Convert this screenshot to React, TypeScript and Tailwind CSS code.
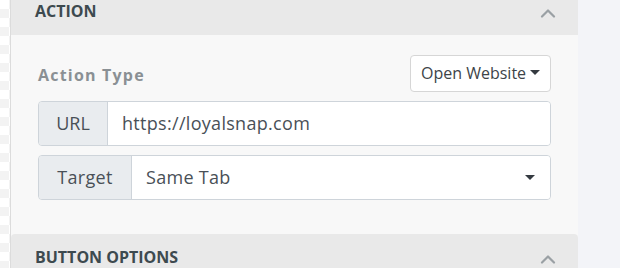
import React from "react";

function ChevronUp() {
  return (
    <svg width="16" height="10" viewBox="0 0 16 10" fill="none">
      <path d="M2 8.5 L8 2.5 L14 8.5" stroke="#9aa0a4" strokeWidth="2.2" strokeLinecap="round" strokeLinejoin="round" />
    </svg>
  );
}

function Caret() {
  return (
    <svg width="10" height="6" viewBox="0 0 10 6">
      <path d="M0 0 L10 0 L5 5 Z" fill="#343a40" />
    </svg>
  );
}

export default function App() {
  return (
    <div className="flex w-[620px] h-[268px] overflow-hidden bg-[#f3f4f8]" style={{ fontFamily: '"Open Sans", sans-serif' }}>
      <div className="w-[10px] shrink-0 bg-[repeating-conic-gradient(#f3f3f3_0%_25%,#ffffff_0%_50%)] bg-[length:18px_18px]" />
      <div className="w-[568px] shrink-0 flex flex-col border-l border-[#dcdcdc] bg-[#f8f8f8]">
        <div className="h-[35px] shrink-0 flex items-center justify-between bg-[#e9e9e9] pl-[24px] pr-[22px]">
          <span className="text-[16px] font-bold text-[#3d4a4f] leading-none -mt-[13px]">ACTION</span>
          <span className="-mt-[9px]"><ChevronUp /></span>
        </div>
        <div className="flex flex-col pl-[27px] pr-[27px] pt-[20px] pb-[34px]">
          <div className="flex items-center justify-between h-[36px]">
            <span className="text-[16px] font-bold text-[#8a9094] tracking-[1.2px] mt-[3px]">Action Type</span>
            <div className="h-[37px] w-[141px] flex items-center gap-[4px] rounded-[4px] border border-[#d6d6d6] bg-white pl-[10px]">
              <span className="text-[16px] text-[#3d4448]">Open Website</span>
              <Caret />
            </div>
          </div>
          <div className="mt-[10px] flex h-[45px] rounded-[4px] border border-[#ced4da] overflow-hidden">
            <div className="w-[69px] shrink-0 flex items-center justify-center bg-[#e9ecef] border-r border-[#ced4da] text-[18px] text-[#495057]">URL</div>
            <div className="flex-1 flex items-center bg-white pl-[14px] text-[18px] text-[#495057] tracking-[0.3px]">https://loyalsnap.com</div>
          </div>
          <div className="mt-[9px] flex h-[45px] rounded-[4px] border border-[#ced4da] overflow-hidden">
            <div className="w-[93px] shrink-0 flex items-center justify-center bg-[#e9ecef] border-r border-[#ced4da] text-[18px] text-[#495057] tracking-[0.3px]">Target</div>
            <div className="flex-1 flex items-center justify-between bg-white pl-[14px] pr-[15px] text-[18px] text-[#495057] tracking-[0.3px]">
              <span>Same Tab</span>
              <Caret />
            </div>
          </div>
        </div>
        <div className="h-[35px] shrink-0 flex items-center justify-between bg-[#e9e9e9] pl-[24px] pr-[22px] rounded-t-[4px]">
          <span className="text-[16px] font-bold text-[#3d4a4f] leading-none mt-[10px]">BUTTON OPTIONS</span>
          <span className="mt-[14px]"><ChevronUp /></span>
        </div>
      </div>
      <div className="flex-1" />
    </div>
  );
}
